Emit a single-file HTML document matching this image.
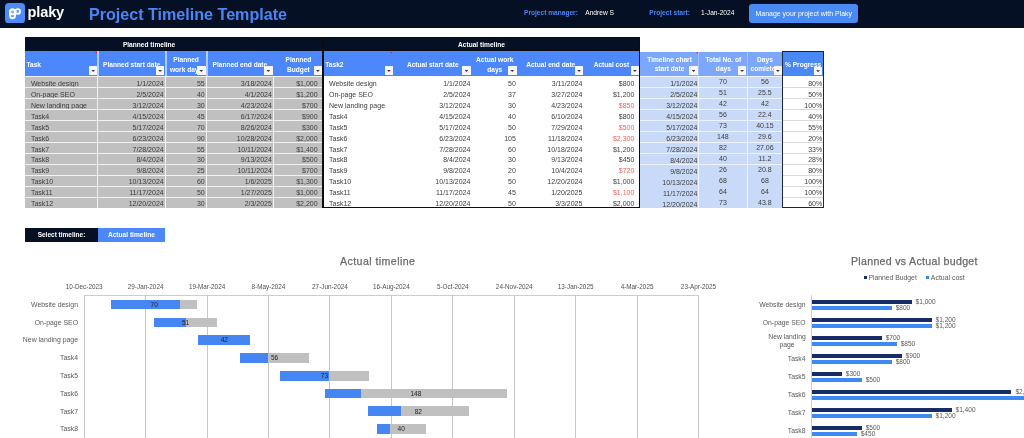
<!DOCTYPE html>
<html><head><meta charset="utf-8"><title>Project Timeline Template</title>
<style>
html,body{margin:0;padding:0;background:#fff;}
body{width:1024px;height:438px;overflow:hidden;position:relative;font-family:"Liberation Sans", sans-serif;}
#root{position:absolute;left:0;top:0;width:1024px;height:438px;overflow:hidden;will-change:transform;}
#root div{position:absolute;box-sizing:border-box;}
.t{white-space:nowrap;font-family:"Liberation Sans", sans-serif;}
.b{font-weight:bold;}
.c{text-align:center;}
.r{text-align:right;}
.d{font-size:7px;color:#3c3c3c;}
</style></head><body><div id="root">
<div style="left:0px;top:0px;width:1024px;height:27.8px;background:#051024;"></div>
<svg style="position:absolute;left:5px;top:2.85px" width="20" height="20.4" viewBox="0 0 20 20.4"><rect x="0" y="0" width="20" height="20.4" rx="3.8" fill="#4d8bfa"/>
<g fill="rgba(255,255,255,0.15)" stroke="#fff" stroke-width="1.8"><rect x="5.0" y="6.35" width="5.0" height="8.9" rx="2.5"/><circle cx="7.5" cy="8.85" r="2.5"/><circle cx="12.75" cy="8.55" r="2.35"/></g></svg>
<div class="t b" style="left:27.5px;top:3.3px;width:40px;height:18px;line-height:18px;font-size:14.6px;color:#fff;letter-spacing:-0.15px;">plaky</div>
<div class="t b" style="left:89px;top:2.6px;width:300px;height:22px;line-height:22px;font-size:16.1px;color:#4a86f7;">Project Timeline Template</div>
<div class="t b" style="left:524px;top:8.4px;width:60px;height:10px;line-height:10px;font-size:6.6px;color:#4a86f7;">Project manager:</div>
<div class="t " style="left:585.3px;top:8.4px;width:60px;height:10px;line-height:10px;font-size:6.6px;color:#fff;">Andrew S</div>
<div class="t b" style="left:649.3px;top:8.4px;width:60px;height:10px;line-height:10px;font-size:6.6px;color:#4a86f7;">Project start:</div>
<div class="t " style="left:701px;top:8.4px;width:60px;height:10px;line-height:10px;font-size:6.6px;color:#fff;">1-Jan-2024</div>
<div style="left:748.9px;top:3.6px;width:109.2px;height:19.5px;background:#4a8af3;border-radius:3.2px;"></div>
<div class="t c" style="left:748.9px;top:4.0px;width:109.8px;height:19.5px;line-height:19.5px;font-size:6.95px;color:#fff;">Manage your project with Plaky</div>
<div style="left:25px;top:37.3px;width:297.5px;height:14px;background:#051024;"></div>
<div class="t b c" style="left:25px;top:37.9px;width:248.2px;height:14.2px;line-height:14.2px;font-size:6.6px;color:#fff;">Planned timeline</div>
<div style="left:25px;top:51.3px;width:298px;height:24.3px;background:#4c88fb;"></div>
<div style="left:97.4px;top:51.3px;width:1.5px;height:24.3px;background:#b4ccfb;"></div>
<div style="left:165.2px;top:51.3px;width:1.5px;height:24.3px;background:#b4ccfb;"></div>
<div style="left:206px;top:51.3px;width:1.5px;height:24.3px;background:#b4ccfb;"></div>
<div style="left:25px;top:76.2px;width:297.5px;height:10.95px;background:#f2f2f2;"></div>
<div style="left:25px;top:77.10000000000001px;width:72.2px;height:10.049999999999999px;background:#c0c0c0;"></div>
<div class="t d" style="left:30.9px;top:78.8px;width:66.2px;height:10.049999999999999px;line-height:10.049999999999999px;">Website design</div>
<div style="left:98.4px;top:77.10000000000001px;width:66.6px;height:10.049999999999999px;background:#c0c0c0;"></div>
<div class="t d r" style="left:98.4px;top:78.8px;width:65.3px;height:10.049999999999999px;line-height:10.049999999999999px;">1/1/2024</div>
<div style="left:166.2px;top:77.10000000000001px;width:39.80000000000001px;height:10.049999999999999px;background:#c0c0c0;"></div>
<div class="t d r" style="left:166.2px;top:78.8px;width:38.500000000000014px;height:10.049999999999999px;line-height:10.049999999999999px;">55</div>
<div style="left:206.6px;top:77.10000000000001px;width:66.6px;height:10.049999999999999px;background:#c0c0c0;"></div>
<div class="t d r" style="left:206.6px;top:78.8px;width:65.3px;height:10.049999999999999px;line-height:10.049999999999999px;">3/18/2024</div>
<div style="left:274px;top:77.10000000000001px;width:48.80000000000001px;height:10.049999999999999px;background:#c0c0c0;"></div>
<div class="t d r" style="left:274px;top:78.8px;width:43.60000000000001px;height:10.049999999999999px;line-height:10.049999999999999px;">$1,000</div>
<div style="left:25px;top:87.15px;width:297.5px;height:10.95px;background:#f2f2f2;"></div>
<div style="left:25px;top:88.05000000000001px;width:72.2px;height:10.049999999999999px;background:#c0c0c0;"></div>
<div class="t d" style="left:30.9px;top:89.75px;width:66.2px;height:10.049999999999999px;line-height:10.049999999999999px;">On-page SEO</div>
<div style="left:98.4px;top:88.05000000000001px;width:66.6px;height:10.049999999999999px;background:#c0c0c0;"></div>
<div class="t d r" style="left:98.4px;top:89.75px;width:65.3px;height:10.049999999999999px;line-height:10.049999999999999px;">2/5/2024</div>
<div style="left:166.2px;top:88.05000000000001px;width:39.80000000000001px;height:10.049999999999999px;background:#c0c0c0;"></div>
<div class="t d r" style="left:166.2px;top:89.75px;width:38.500000000000014px;height:10.049999999999999px;line-height:10.049999999999999px;">40</div>
<div style="left:206.6px;top:88.05000000000001px;width:66.6px;height:10.049999999999999px;background:#c0c0c0;"></div>
<div class="t d r" style="left:206.6px;top:89.75px;width:65.3px;height:10.049999999999999px;line-height:10.049999999999999px;">4/1/2024</div>
<div style="left:274px;top:88.05000000000001px;width:48.80000000000001px;height:10.049999999999999px;background:#c0c0c0;"></div>
<div class="t d r" style="left:274px;top:89.75px;width:43.60000000000001px;height:10.049999999999999px;line-height:10.049999999999999px;">$1,200</div>
<div style="left:25px;top:98.1px;width:297.5px;height:10.95px;background:#f2f2f2;"></div>
<div style="left:25px;top:99.0px;width:72.2px;height:10.049999999999999px;background:#c0c0c0;"></div>
<div class="t d" style="left:30.9px;top:100.69999999999999px;width:66.2px;height:10.049999999999999px;line-height:10.049999999999999px;">New landing page</div>
<div style="left:98.4px;top:99.0px;width:66.6px;height:10.049999999999999px;background:#c0c0c0;"></div>
<div class="t d r" style="left:98.4px;top:100.69999999999999px;width:65.3px;height:10.049999999999999px;line-height:10.049999999999999px;">3/12/2024</div>
<div style="left:166.2px;top:99.0px;width:39.80000000000001px;height:10.049999999999999px;background:#c0c0c0;"></div>
<div class="t d r" style="left:166.2px;top:100.69999999999999px;width:38.500000000000014px;height:10.049999999999999px;line-height:10.049999999999999px;">30</div>
<div style="left:206.6px;top:99.0px;width:66.6px;height:10.049999999999999px;background:#c0c0c0;"></div>
<div class="t d r" style="left:206.6px;top:100.69999999999999px;width:65.3px;height:10.049999999999999px;line-height:10.049999999999999px;">4/23/2024</div>
<div style="left:274px;top:99.0px;width:48.80000000000001px;height:10.049999999999999px;background:#c0c0c0;"></div>
<div class="t d r" style="left:274px;top:100.69999999999999px;width:43.60000000000001px;height:10.049999999999999px;line-height:10.049999999999999px;">$700</div>
<div style="left:25px;top:109.05px;width:297.5px;height:10.95px;background:#f2f2f2;"></div>
<div style="left:25px;top:109.95px;width:72.2px;height:10.049999999999999px;background:#c0c0c0;"></div>
<div class="t d" style="left:30.9px;top:111.64999999999999px;width:66.2px;height:10.049999999999999px;line-height:10.049999999999999px;">Task4</div>
<div style="left:98.4px;top:109.95px;width:66.6px;height:10.049999999999999px;background:#c0c0c0;"></div>
<div class="t d r" style="left:98.4px;top:111.64999999999999px;width:65.3px;height:10.049999999999999px;line-height:10.049999999999999px;">4/15/2024</div>
<div style="left:166.2px;top:109.95px;width:39.80000000000001px;height:10.049999999999999px;background:#c0c0c0;"></div>
<div class="t d r" style="left:166.2px;top:111.64999999999999px;width:38.500000000000014px;height:10.049999999999999px;line-height:10.049999999999999px;">45</div>
<div style="left:206.6px;top:109.95px;width:66.6px;height:10.049999999999999px;background:#c0c0c0;"></div>
<div class="t d r" style="left:206.6px;top:111.64999999999999px;width:65.3px;height:10.049999999999999px;line-height:10.049999999999999px;">6/17/2024</div>
<div style="left:274px;top:109.95px;width:48.80000000000001px;height:10.049999999999999px;background:#c0c0c0;"></div>
<div class="t d r" style="left:274px;top:111.64999999999999px;width:43.60000000000001px;height:10.049999999999999px;line-height:10.049999999999999px;">$900</div>
<div style="left:25px;top:120.0px;width:297.5px;height:10.95px;background:#f2f2f2;"></div>
<div style="left:25px;top:120.9px;width:72.2px;height:10.049999999999999px;background:#c0c0c0;"></div>
<div class="t d" style="left:30.9px;top:122.6px;width:66.2px;height:10.049999999999999px;line-height:10.049999999999999px;">Task5</div>
<div style="left:98.4px;top:120.9px;width:66.6px;height:10.049999999999999px;background:#c0c0c0;"></div>
<div class="t d r" style="left:98.4px;top:122.6px;width:65.3px;height:10.049999999999999px;line-height:10.049999999999999px;">5/17/2024</div>
<div style="left:166.2px;top:120.9px;width:39.80000000000001px;height:10.049999999999999px;background:#c0c0c0;"></div>
<div class="t d r" style="left:166.2px;top:122.6px;width:38.500000000000014px;height:10.049999999999999px;line-height:10.049999999999999px;">70</div>
<div style="left:206.6px;top:120.9px;width:66.6px;height:10.049999999999999px;background:#c0c0c0;"></div>
<div class="t d r" style="left:206.6px;top:122.6px;width:65.3px;height:10.049999999999999px;line-height:10.049999999999999px;">8/26/2024</div>
<div style="left:274px;top:120.9px;width:48.80000000000001px;height:10.049999999999999px;background:#c0c0c0;"></div>
<div class="t d r" style="left:274px;top:122.6px;width:43.60000000000001px;height:10.049999999999999px;line-height:10.049999999999999px;">$300</div>
<div style="left:25px;top:130.95px;width:297.5px;height:10.95px;background:#f2f2f2;"></div>
<div style="left:25px;top:131.85px;width:72.2px;height:10.049999999999999px;background:#c0c0c0;"></div>
<div class="t d" style="left:30.9px;top:133.54999999999998px;width:66.2px;height:10.049999999999999px;line-height:10.049999999999999px;">Task6</div>
<div style="left:98.4px;top:131.85px;width:66.6px;height:10.049999999999999px;background:#c0c0c0;"></div>
<div class="t d r" style="left:98.4px;top:133.54999999999998px;width:65.3px;height:10.049999999999999px;line-height:10.049999999999999px;">6/23/2024</div>
<div style="left:166.2px;top:131.85px;width:39.80000000000001px;height:10.049999999999999px;background:#c0c0c0;"></div>
<div class="t d r" style="left:166.2px;top:133.54999999999998px;width:38.500000000000014px;height:10.049999999999999px;line-height:10.049999999999999px;">90</div>
<div style="left:206.6px;top:131.85px;width:66.6px;height:10.049999999999999px;background:#c0c0c0;"></div>
<div class="t d r" style="left:206.6px;top:133.54999999999998px;width:65.3px;height:10.049999999999999px;line-height:10.049999999999999px;">10/28/2024</div>
<div style="left:274px;top:131.85px;width:48.80000000000001px;height:10.049999999999999px;background:#c0c0c0;"></div>
<div class="t d r" style="left:274px;top:133.54999999999998px;width:43.60000000000001px;height:10.049999999999999px;line-height:10.049999999999999px;">$2,000</div>
<div style="left:25px;top:141.89999999999998px;width:297.5px;height:10.95px;background:#f2f2f2;"></div>
<div style="left:25px;top:142.79999999999998px;width:72.2px;height:10.049999999999999px;background:#c0c0c0;"></div>
<div class="t d" style="left:30.9px;top:144.49999999999997px;width:66.2px;height:10.049999999999999px;line-height:10.049999999999999px;">Task7</div>
<div style="left:98.4px;top:142.79999999999998px;width:66.6px;height:10.049999999999999px;background:#c0c0c0;"></div>
<div class="t d r" style="left:98.4px;top:144.49999999999997px;width:65.3px;height:10.049999999999999px;line-height:10.049999999999999px;">7/28/2024</div>
<div style="left:166.2px;top:142.79999999999998px;width:39.80000000000001px;height:10.049999999999999px;background:#c0c0c0;"></div>
<div class="t d r" style="left:166.2px;top:144.49999999999997px;width:38.500000000000014px;height:10.049999999999999px;line-height:10.049999999999999px;">55</div>
<div style="left:206.6px;top:142.79999999999998px;width:66.6px;height:10.049999999999999px;background:#c0c0c0;"></div>
<div class="t d r" style="left:206.6px;top:144.49999999999997px;width:65.3px;height:10.049999999999999px;line-height:10.049999999999999px;">10/11/2024</div>
<div style="left:274px;top:142.79999999999998px;width:48.80000000000001px;height:10.049999999999999px;background:#c0c0c0;"></div>
<div class="t d r" style="left:274px;top:144.49999999999997px;width:43.60000000000001px;height:10.049999999999999px;line-height:10.049999999999999px;">$1,400</div>
<div style="left:25px;top:152.85px;width:297.5px;height:10.95px;background:#f2f2f2;"></div>
<div style="left:25px;top:153.75px;width:72.2px;height:10.049999999999999px;background:#c0c0c0;"></div>
<div class="t d" style="left:30.9px;top:155.45px;width:66.2px;height:10.049999999999999px;line-height:10.049999999999999px;">Task8</div>
<div style="left:98.4px;top:153.75px;width:66.6px;height:10.049999999999999px;background:#c0c0c0;"></div>
<div class="t d r" style="left:98.4px;top:155.45px;width:65.3px;height:10.049999999999999px;line-height:10.049999999999999px;">8/4/2024</div>
<div style="left:166.2px;top:153.75px;width:39.80000000000001px;height:10.049999999999999px;background:#c0c0c0;"></div>
<div class="t d r" style="left:166.2px;top:155.45px;width:38.500000000000014px;height:10.049999999999999px;line-height:10.049999999999999px;">30</div>
<div style="left:206.6px;top:153.75px;width:66.6px;height:10.049999999999999px;background:#c0c0c0;"></div>
<div class="t d r" style="left:206.6px;top:155.45px;width:65.3px;height:10.049999999999999px;line-height:10.049999999999999px;">9/13/2024</div>
<div style="left:274px;top:153.75px;width:48.80000000000001px;height:10.049999999999999px;background:#c0c0c0;"></div>
<div class="t d r" style="left:274px;top:155.45px;width:43.60000000000001px;height:10.049999999999999px;line-height:10.049999999999999px;">$500</div>
<div style="left:25px;top:163.8px;width:297.5px;height:10.95px;background:#f2f2f2;"></div>
<div style="left:25px;top:164.70000000000002px;width:72.2px;height:10.049999999999999px;background:#c0c0c0;"></div>
<div class="t d" style="left:30.9px;top:166.4px;width:66.2px;height:10.049999999999999px;line-height:10.049999999999999px;">Task9</div>
<div style="left:98.4px;top:164.70000000000002px;width:66.6px;height:10.049999999999999px;background:#c0c0c0;"></div>
<div class="t d r" style="left:98.4px;top:166.4px;width:65.3px;height:10.049999999999999px;line-height:10.049999999999999px;">9/8/2024</div>
<div style="left:166.2px;top:164.70000000000002px;width:39.80000000000001px;height:10.049999999999999px;background:#c0c0c0;"></div>
<div class="t d r" style="left:166.2px;top:166.4px;width:38.500000000000014px;height:10.049999999999999px;line-height:10.049999999999999px;">25</div>
<div style="left:206.6px;top:164.70000000000002px;width:66.6px;height:10.049999999999999px;background:#c0c0c0;"></div>
<div class="t d r" style="left:206.6px;top:166.4px;width:65.3px;height:10.049999999999999px;line-height:10.049999999999999px;">10/11/2024</div>
<div style="left:274px;top:164.70000000000002px;width:48.80000000000001px;height:10.049999999999999px;background:#c0c0c0;"></div>
<div class="t d r" style="left:274px;top:166.4px;width:43.60000000000001px;height:10.049999999999999px;line-height:10.049999999999999px;">$700</div>
<div style="left:25px;top:174.75px;width:297.5px;height:10.95px;background:#f2f2f2;"></div>
<div style="left:25px;top:175.65px;width:72.2px;height:10.049999999999999px;background:#c0c0c0;"></div>
<div class="t d" style="left:30.9px;top:177.35px;width:66.2px;height:10.049999999999999px;line-height:10.049999999999999px;">Task10</div>
<div style="left:98.4px;top:175.65px;width:66.6px;height:10.049999999999999px;background:#c0c0c0;"></div>
<div class="t d r" style="left:98.4px;top:177.35px;width:65.3px;height:10.049999999999999px;line-height:10.049999999999999px;">10/13/2024</div>
<div style="left:166.2px;top:175.65px;width:39.80000000000001px;height:10.049999999999999px;background:#c0c0c0;"></div>
<div class="t d r" style="left:166.2px;top:177.35px;width:38.500000000000014px;height:10.049999999999999px;line-height:10.049999999999999px;">60</div>
<div style="left:206.6px;top:175.65px;width:66.6px;height:10.049999999999999px;background:#c0c0c0;"></div>
<div class="t d r" style="left:206.6px;top:177.35px;width:65.3px;height:10.049999999999999px;line-height:10.049999999999999px;">1/6/2025</div>
<div style="left:274px;top:175.65px;width:48.80000000000001px;height:10.049999999999999px;background:#c0c0c0;"></div>
<div class="t d r" style="left:274px;top:177.35px;width:43.60000000000001px;height:10.049999999999999px;line-height:10.049999999999999px;">$1,300</div>
<div style="left:25px;top:185.7px;width:297.5px;height:10.95px;background:#f2f2f2;"></div>
<div style="left:25px;top:186.6px;width:72.2px;height:10.049999999999999px;background:#c0c0c0;"></div>
<div class="t d" style="left:30.9px;top:188.29999999999998px;width:66.2px;height:10.049999999999999px;line-height:10.049999999999999px;">Task11</div>
<div style="left:98.4px;top:186.6px;width:66.6px;height:10.049999999999999px;background:#c0c0c0;"></div>
<div class="t d r" style="left:98.4px;top:188.29999999999998px;width:65.3px;height:10.049999999999999px;line-height:10.049999999999999px;">11/17/2024</div>
<div style="left:166.2px;top:186.6px;width:39.80000000000001px;height:10.049999999999999px;background:#c0c0c0;"></div>
<div class="t d r" style="left:166.2px;top:188.29999999999998px;width:38.500000000000014px;height:10.049999999999999px;line-height:10.049999999999999px;">50</div>
<div style="left:206.6px;top:186.6px;width:66.6px;height:10.049999999999999px;background:#c0c0c0;"></div>
<div class="t d r" style="left:206.6px;top:188.29999999999998px;width:65.3px;height:10.049999999999999px;line-height:10.049999999999999px;">1/27/2025</div>
<div style="left:274px;top:186.6px;width:48.80000000000001px;height:10.049999999999999px;background:#c0c0c0;"></div>
<div class="t d r" style="left:274px;top:188.29999999999998px;width:43.60000000000001px;height:10.049999999999999px;line-height:10.049999999999999px;">$1,000</div>
<div style="left:25px;top:196.64999999999998px;width:297.5px;height:10.95px;background:#f2f2f2;"></div>
<div style="left:25px;top:197.54999999999998px;width:72.2px;height:10.049999999999999px;background:#c0c0c0;"></div>
<div class="t d" style="left:30.9px;top:199.24999999999997px;width:66.2px;height:10.049999999999999px;line-height:10.049999999999999px;">Task12</div>
<div style="left:98.4px;top:197.54999999999998px;width:66.6px;height:10.049999999999999px;background:#c0c0c0;"></div>
<div class="t d r" style="left:98.4px;top:199.24999999999997px;width:65.3px;height:10.049999999999999px;line-height:10.049999999999999px;">12/20/2024</div>
<div style="left:166.2px;top:197.54999999999998px;width:39.80000000000001px;height:10.049999999999999px;background:#c0c0c0;"></div>
<div class="t d r" style="left:166.2px;top:199.24999999999997px;width:38.500000000000014px;height:10.049999999999999px;line-height:10.049999999999999px;">30</div>
<div style="left:206.6px;top:197.54999999999998px;width:66.6px;height:10.049999999999999px;background:#c0c0c0;"></div>
<div class="t d r" style="left:206.6px;top:199.24999999999997px;width:65.3px;height:10.049999999999999px;line-height:10.049999999999999px;">2/3/2025</div>
<div style="left:274px;top:197.54999999999998px;width:48.80000000000001px;height:10.049999999999999px;background:#c0c0c0;"></div>
<div class="t d r" style="left:274px;top:199.24999999999997px;width:43.60000000000001px;height:10.049999999999999px;line-height:10.049999999999999px;">$2,200</div>
<div class="t b" style="left:26.5px;top:57.3px;width:70.5px;height:16px;line-height:16px;font-size:6.6px;color:#fff;">Task</div>
<div class="t b c" style="left:98.4px;top:57.3px;width:66.6px;height:16px;line-height:16px;font-size:6.6px;color:#fff;">Planned start date</div>
<div class="t b c" style="left:166.2px;top:55.1px;width:39.8px;font-size:6.6px;color:#fff;line-height:9.4px;">Planned<br>work days</div>
<div class="t b c" style="left:206.6px;top:57.3px;width:66.6px;height:16px;line-height:16px;font-size:6.6px;color:#fff;">Planned end date</div>
<div class="t b c" style="left:274px;top:55.1px;width:48.8px;font-size:6.6px;color:#fff;line-height:9.4px;">Planned<br>Budget</div>
<div style="left:88.9px;top:66.4px;width:8.6px;height:8.3px;background:#f6f6f6;border-radius:0.6px;"><div style="left:2.4px;top:3.6px;width:3.8px;height:2px;background:#3a3a3a;clip-path:polygon(0 0,100% 0,50% 100%);"></div></div>
<div style="left:155.8px;top:66.4px;width:8.6px;height:8.3px;background:#f6f6f6;border-radius:0.6px;"><div style="left:2.4px;top:3.6px;width:3.8px;height:2px;background:#3a3a3a;clip-path:polygon(0 0,100% 0,50% 100%);"></div></div>
<div style="left:197px;top:66.4px;width:8.6px;height:8.3px;background:#f6f6f6;border-radius:0.6px;"><div style="left:2.4px;top:3.6px;width:3.8px;height:2px;background:#3a3a3a;clip-path:polygon(0 0,100% 0,50% 100%);"></div></div>
<div style="left:264px;top:66.4px;width:8.6px;height:8.3px;background:#f6f6f6;border-radius:0.6px;"><div style="left:2.4px;top:3.6px;width:3.8px;height:2px;background:#3a3a3a;clip-path:polygon(0 0,100% 0,50% 100%);"></div></div>
<div style="left:313.6px;top:66.4px;width:8.6px;height:8.3px;background:#f6f6f6;border-radius:0.6px;"><div style="left:2.4px;top:3.6px;width:3.8px;height:2px;background:#3a3a3a;clip-path:polygon(0 0,100% 0,50% 100%);"></div></div>
<div style="left:94.7px;top:51.6px;width:0;height:0;border-left:2.8px solid transparent;border-top:2.8px solid #e8234a;"></div>
<div style="left:322.4px;top:36.6px;width:317.6px;height:171.8px;background:#0b0d12;"></div>
<div style="left:323.9px;top:38px;width:314.90000000000003px;height:11.3px;background:#051024;"></div>
<div class="t b c" style="left:323px;top:37.9px;width:317px;height:14.2px;line-height:14.2px;font-size:6.6px;color:#fff;">Actual timeline</div>
<div style="left:323.9px;top:51px;width:314.90000000000003px;height:24.6px;background:#4c88fb;"></div>
<div style="left:323.9px;top:75.6px;width:314.90000000000003px;height:131.3px;background:#fff;"></div>
<div class="t d" style="left:329.0px;top:78.8px;width:64.30000000000001px;height:10.049999999999999px;line-height:10.049999999999999px;color:#3c3c3c;">Website design</div>
<div class="t d r" style="left:393.5px;top:78.8px;width:76.9px;height:10.049999999999999px;line-height:10.049999999999999px;color:#3c3c3c;">1/1/2024</div>
<div class="t d r" style="left:472px;top:78.8px;width:43.9px;height:10.049999999999999px;line-height:10.049999999999999px;color:#3c3c3c;">50</div>
<div class="t d r" style="left:517.5px;top:78.8px;width:64.9px;height:10.049999999999999px;line-height:10.049999999999999px;color:#3c3c3c;">3/11/2024</div>
<div class="t d r" style="left:584px;top:78.8px;width:50.399999999999956px;height:10.049999999999999px;line-height:10.049999999999999px;color:#3c3c3c;">$800</div>
<div class="t d" style="left:329.0px;top:89.75px;width:64.30000000000001px;height:10.049999999999999px;line-height:10.049999999999999px;color:#3c3c3c;">On-page SEO</div>
<div class="t d r" style="left:393.5px;top:89.75px;width:76.9px;height:10.049999999999999px;line-height:10.049999999999999px;color:#3c3c3c;">2/5/2024</div>
<div class="t d r" style="left:472px;top:89.75px;width:43.9px;height:10.049999999999999px;line-height:10.049999999999999px;color:#3c3c3c;">37</div>
<div class="t d r" style="left:517.5px;top:89.75px;width:64.9px;height:10.049999999999999px;line-height:10.049999999999999px;color:#3c3c3c;">3/27/2024</div>
<div class="t d r" style="left:584px;top:89.75px;width:50.399999999999956px;height:10.049999999999999px;line-height:10.049999999999999px;color:#3c3c3c;">$1,200</div>
<div class="t d" style="left:329.0px;top:100.69999999999999px;width:64.30000000000001px;height:10.049999999999999px;line-height:10.049999999999999px;color:#3c3c3c;">New landing page</div>
<div class="t d r" style="left:393.5px;top:100.69999999999999px;width:76.9px;height:10.049999999999999px;line-height:10.049999999999999px;color:#3c3c3c;">3/12/2024</div>
<div class="t d r" style="left:472px;top:100.69999999999999px;width:43.9px;height:10.049999999999999px;line-height:10.049999999999999px;color:#3c3c3c;">30</div>
<div class="t d r" style="left:517.5px;top:100.69999999999999px;width:64.9px;height:10.049999999999999px;line-height:10.049999999999999px;color:#3c3c3c;">4/23/2024</div>
<div class="t d r" style="left:584px;top:100.69999999999999px;width:50.399999999999956px;height:10.049999999999999px;line-height:10.049999999999999px;color:#f0635a;">$850</div>
<div class="t d" style="left:329.0px;top:111.64999999999999px;width:64.30000000000001px;height:10.049999999999999px;line-height:10.049999999999999px;color:#3c3c3c;">Task4</div>
<div class="t d r" style="left:393.5px;top:111.64999999999999px;width:76.9px;height:10.049999999999999px;line-height:10.049999999999999px;color:#3c3c3c;">4/15/2024</div>
<div class="t d r" style="left:472px;top:111.64999999999999px;width:43.9px;height:10.049999999999999px;line-height:10.049999999999999px;color:#3c3c3c;">40</div>
<div class="t d r" style="left:517.5px;top:111.64999999999999px;width:64.9px;height:10.049999999999999px;line-height:10.049999999999999px;color:#3c3c3c;">6/10/2024</div>
<div class="t d r" style="left:584px;top:111.64999999999999px;width:50.399999999999956px;height:10.049999999999999px;line-height:10.049999999999999px;color:#3c3c3c;">$800</div>
<div class="t d" style="left:329.0px;top:122.6px;width:64.30000000000001px;height:10.049999999999999px;line-height:10.049999999999999px;color:#3c3c3c;">Task5</div>
<div class="t d r" style="left:393.5px;top:122.6px;width:76.9px;height:10.049999999999999px;line-height:10.049999999999999px;color:#3c3c3c;">5/17/2024</div>
<div class="t d r" style="left:472px;top:122.6px;width:43.9px;height:10.049999999999999px;line-height:10.049999999999999px;color:#3c3c3c;">50</div>
<div class="t d r" style="left:517.5px;top:122.6px;width:64.9px;height:10.049999999999999px;line-height:10.049999999999999px;color:#3c3c3c;">7/29/2024</div>
<div class="t d r" style="left:584px;top:122.6px;width:50.399999999999956px;height:10.049999999999999px;line-height:10.049999999999999px;color:#f0635a;">$500</div>
<div class="t d" style="left:329.0px;top:133.54999999999998px;width:64.30000000000001px;height:10.049999999999999px;line-height:10.049999999999999px;color:#3c3c3c;">Task6</div>
<div class="t d r" style="left:393.5px;top:133.54999999999998px;width:76.9px;height:10.049999999999999px;line-height:10.049999999999999px;color:#3c3c3c;">6/23/2024</div>
<div class="t d r" style="left:472px;top:133.54999999999998px;width:43.9px;height:10.049999999999999px;line-height:10.049999999999999px;color:#3c3c3c;">105</div>
<div class="t d r" style="left:517.5px;top:133.54999999999998px;width:64.9px;height:10.049999999999999px;line-height:10.049999999999999px;color:#3c3c3c;">11/18/2024</div>
<div class="t d r" style="left:584px;top:133.54999999999998px;width:50.399999999999956px;height:10.049999999999999px;line-height:10.049999999999999px;color:#f0635a;">$2,300</div>
<div class="t d" style="left:329.0px;top:144.49999999999997px;width:64.30000000000001px;height:10.049999999999999px;line-height:10.049999999999999px;color:#3c3c3c;">Task7</div>
<div class="t d r" style="left:393.5px;top:144.49999999999997px;width:76.9px;height:10.049999999999999px;line-height:10.049999999999999px;color:#3c3c3c;">7/28/2024</div>
<div class="t d r" style="left:472px;top:144.49999999999997px;width:43.9px;height:10.049999999999999px;line-height:10.049999999999999px;color:#3c3c3c;">60</div>
<div class="t d r" style="left:517.5px;top:144.49999999999997px;width:64.9px;height:10.049999999999999px;line-height:10.049999999999999px;color:#3c3c3c;">10/18/2024</div>
<div class="t d r" style="left:584px;top:144.49999999999997px;width:50.399999999999956px;height:10.049999999999999px;line-height:10.049999999999999px;color:#3c3c3c;">$1,200</div>
<div class="t d" style="left:329.0px;top:155.45px;width:64.30000000000001px;height:10.049999999999999px;line-height:10.049999999999999px;color:#3c3c3c;">Task8</div>
<div class="t d r" style="left:393.5px;top:155.45px;width:76.9px;height:10.049999999999999px;line-height:10.049999999999999px;color:#3c3c3c;">8/4/2024</div>
<div class="t d r" style="left:472px;top:155.45px;width:43.9px;height:10.049999999999999px;line-height:10.049999999999999px;color:#3c3c3c;">30</div>
<div class="t d r" style="left:517.5px;top:155.45px;width:64.9px;height:10.049999999999999px;line-height:10.049999999999999px;color:#3c3c3c;">9/13/2024</div>
<div class="t d r" style="left:584px;top:155.45px;width:50.399999999999956px;height:10.049999999999999px;line-height:10.049999999999999px;color:#3c3c3c;">$450</div>
<div class="t d" style="left:329.0px;top:166.4px;width:64.30000000000001px;height:10.049999999999999px;line-height:10.049999999999999px;color:#3c3c3c;">Task9</div>
<div class="t d r" style="left:393.5px;top:166.4px;width:76.9px;height:10.049999999999999px;line-height:10.049999999999999px;color:#3c3c3c;">9/8/2024</div>
<div class="t d r" style="left:472px;top:166.4px;width:43.9px;height:10.049999999999999px;line-height:10.049999999999999px;color:#3c3c3c;">20</div>
<div class="t d r" style="left:517.5px;top:166.4px;width:64.9px;height:10.049999999999999px;line-height:10.049999999999999px;color:#3c3c3c;">10/4/2024</div>
<div class="t d r" style="left:584px;top:166.4px;width:50.399999999999956px;height:10.049999999999999px;line-height:10.049999999999999px;color:#f0635a;">$720</div>
<div class="t d" style="left:329.0px;top:177.35px;width:64.30000000000001px;height:10.049999999999999px;line-height:10.049999999999999px;color:#3c3c3c;">Task10</div>
<div class="t d r" style="left:393.5px;top:177.35px;width:76.9px;height:10.049999999999999px;line-height:10.049999999999999px;color:#3c3c3c;">10/13/2024</div>
<div class="t d r" style="left:472px;top:177.35px;width:43.9px;height:10.049999999999999px;line-height:10.049999999999999px;color:#3c3c3c;">50</div>
<div class="t d r" style="left:517.5px;top:177.35px;width:64.9px;height:10.049999999999999px;line-height:10.049999999999999px;color:#3c3c3c;">12/20/2024</div>
<div class="t d r" style="left:584px;top:177.35px;width:50.399999999999956px;height:10.049999999999999px;line-height:10.049999999999999px;color:#3c3c3c;">$1,000</div>
<div class="t d" style="left:329.0px;top:188.29999999999998px;width:64.30000000000001px;height:10.049999999999999px;line-height:10.049999999999999px;color:#3c3c3c;">Task11</div>
<div class="t d r" style="left:393.5px;top:188.29999999999998px;width:76.9px;height:10.049999999999999px;line-height:10.049999999999999px;color:#3c3c3c;">11/17/2024</div>
<div class="t d r" style="left:472px;top:188.29999999999998px;width:43.9px;height:10.049999999999999px;line-height:10.049999999999999px;color:#3c3c3c;">45</div>
<div class="t d r" style="left:517.5px;top:188.29999999999998px;width:64.9px;height:10.049999999999999px;line-height:10.049999999999999px;color:#3c3c3c;">1/20/2025</div>
<div class="t d r" style="left:584px;top:188.29999999999998px;width:50.399999999999956px;height:10.049999999999999px;line-height:10.049999999999999px;color:#f0635a;">$1,100</div>
<div class="t d" style="left:329.0px;top:199.24999999999997px;width:64.30000000000001px;height:10.049999999999999px;line-height:10.049999999999999px;color:#3c3c3c;">Task12</div>
<div class="t d r" style="left:393.5px;top:199.24999999999997px;width:76.9px;height:10.049999999999999px;line-height:10.049999999999999px;color:#3c3c3c;">12/20/2024</div>
<div class="t d r" style="left:472px;top:199.24999999999997px;width:43.9px;height:10.049999999999999px;line-height:10.049999999999999px;color:#3c3c3c;">50</div>
<div class="t d r" style="left:517.5px;top:199.24999999999997px;width:64.9px;height:10.049999999999999px;line-height:10.049999999999999px;color:#3c3c3c;">3/3/2025</div>
<div class="t d r" style="left:584px;top:199.24999999999997px;width:50.399999999999956px;height:10.049999999999999px;line-height:10.049999999999999px;color:#3c3c3c;">$2,000</div>
<div class="t b" style="left:325.3px;top:57.3px;width:64.69999999999999px;height:16px;line-height:16px;font-size:6.6px;color:#fff;">Task2</div>
<div class="t b c" style="left:393.5px;top:57.3px;width:78.5px;height:16px;line-height:16px;font-size:6.6px;color:#fff;">Actual start date</div>
<div class="t b c" style="left:472px;top:55.2px;width:45.5px;font-size:6.6px;color:#fff;line-height:9.5px;">Actual work<br>days</div>
<div class="t b c" style="left:517.5px;top:57.3px;width:66.5px;height:16px;line-height:16px;font-size:6.6px;color:#fff;">Actual end date</div>
<div class="t b c" style="left:584px;top:57.3px;width:54.799999999999955px;height:16px;line-height:16px;font-size:6.6px;color:#fff;">Actual cost</div>
<div style="left:384.6px;top:66.4px;width:8.6px;height:8.3px;background:#f6f6f6;border-radius:0.6px;"><div style="left:2.4px;top:3.6px;width:3.8px;height:2px;background:#3a3a3a;clip-path:polygon(0 0,100% 0,50% 100%);"></div></div>
<div style="left:462.2px;top:66.4px;width:8.6px;height:8.3px;background:#f6f6f6;border-radius:0.6px;"><div style="left:2.4px;top:3.6px;width:3.8px;height:2px;background:#3a3a3a;clip-path:polygon(0 0,100% 0,50% 100%);"></div></div>
<div style="left:508px;top:66.4px;width:8.6px;height:8.3px;background:#f6f6f6;border-radius:0.6px;"><div style="left:2.4px;top:3.6px;width:3.8px;height:2px;background:#3a3a3a;clip-path:polygon(0 0,100% 0,50% 100%);"></div></div>
<div style="left:574.8px;top:66.4px;width:8.6px;height:8.3px;background:#f6f6f6;border-radius:0.6px;"><div style="left:2.4px;top:3.6px;width:3.8px;height:2px;background:#3a3a3a;clip-path:polygon(0 0,100% 0,50% 100%);"></div></div>
<div style="left:630.6px;top:66.4px;width:8.6px;height:8.3px;background:#f6f6f6;border-radius:0.6px;"><div style="left:2.4px;top:3.6px;width:3.8px;height:2px;background:#3a3a3a;clip-path:polygon(0 0,100% 0,50% 100%);"></div></div>
<div style="left:390.2px;top:51.7px;width:0;height:0;border-left:2.8px solid transparent;border-top:2.8px solid #e8234a;"></div>
<div style="left:640.3px;top:52px;width:141.9px;height:23.6px;background:#a4c1fa;"></div>
<div style="left:640.3px;top:76.2px;width:141.9px;height:131.4px;background:#eef3fd;"></div>
<div style="left:640.3px;top:52px;width:57.90000000000009px;height:23.6px;background:#7ca7fb;"></div>
<div style="left:699.2px;top:52px;width:47.39999999999998px;height:23.6px;background:#7ca7fb;"></div>
<div style="left:747.6px;top:52px;width:34.60000000000002px;height:23.6px;background:#7ca7fb;"></div>
<div style="left:640.3px;top:76.9px;width:57.90000000000009px;height:10.25px;background:#c9daf8;"></div>
<div class="t d r" style="left:640.3px;top:79.10000000000001px;width:57.100000000000094px;height:10.049999999999999px;line-height:10.049999999999999px;">1/1/2024</div>
<div style="left:699.2px;top:76.9px;width:47.39999999999998px;height:10.25px;background:#c9daf8;"></div>
<div class="t d c" style="left:699.2px;top:77.10000000000001px;width:47.39999999999998px;height:10.049999999999999px;line-height:10.049999999999999px;">70</div>
<div style="left:747.6px;top:76.9px;width:34.60000000000002px;height:10.25px;background:#c9daf8;"></div>
<div class="t d c" style="left:747.6px;top:77.10000000000001px;width:34.60000000000002px;height:10.049999999999999px;line-height:10.049999999999999px;">56</div>
<div style="left:640.3px;top:87.85000000000001px;width:57.90000000000009px;height:10.25px;background:#c9daf8;"></div>
<div class="t d r" style="left:640.3px;top:90.05000000000001px;width:57.100000000000094px;height:10.049999999999999px;line-height:10.049999999999999px;">2/5/2024</div>
<div style="left:699.2px;top:87.85000000000001px;width:47.39999999999998px;height:10.25px;background:#c9daf8;"></div>
<div class="t d c" style="left:699.2px;top:88.05000000000001px;width:47.39999999999998px;height:10.049999999999999px;line-height:10.049999999999999px;">51</div>
<div style="left:747.6px;top:87.85000000000001px;width:34.60000000000002px;height:10.25px;background:#c9daf8;"></div>
<div class="t d c" style="left:747.6px;top:88.05000000000001px;width:34.60000000000002px;height:10.049999999999999px;line-height:10.049999999999999px;">25.5</div>
<div style="left:640.3px;top:98.8px;width:57.90000000000009px;height:10.25px;background:#c9daf8;"></div>
<div class="t d r" style="left:640.3px;top:101.0px;width:57.100000000000094px;height:10.049999999999999px;line-height:10.049999999999999px;">3/12/2024</div>
<div style="left:699.2px;top:98.8px;width:47.39999999999998px;height:10.25px;background:#c9daf8;"></div>
<div class="t d c" style="left:699.2px;top:99.0px;width:47.39999999999998px;height:10.049999999999999px;line-height:10.049999999999999px;">42</div>
<div style="left:747.6px;top:98.8px;width:34.60000000000002px;height:10.25px;background:#c9daf8;"></div>
<div class="t d c" style="left:747.6px;top:99.0px;width:34.60000000000002px;height:10.049999999999999px;line-height:10.049999999999999px;">42</div>
<div style="left:640.3px;top:109.75px;width:57.90000000000009px;height:10.25px;background:#c9daf8;"></div>
<div class="t d r" style="left:640.3px;top:111.95px;width:57.100000000000094px;height:10.049999999999999px;line-height:10.049999999999999px;">4/15/2024</div>
<div style="left:699.2px;top:109.75px;width:47.39999999999998px;height:10.25px;background:#c9daf8;"></div>
<div class="t d c" style="left:699.2px;top:109.95px;width:47.39999999999998px;height:10.049999999999999px;line-height:10.049999999999999px;">56</div>
<div style="left:747.6px;top:109.75px;width:34.60000000000002px;height:10.25px;background:#c9daf8;"></div>
<div class="t d c" style="left:747.6px;top:109.95px;width:34.60000000000002px;height:10.049999999999999px;line-height:10.049999999999999px;">22.4</div>
<div style="left:640.3px;top:120.7px;width:57.90000000000009px;height:10.25px;background:#c9daf8;"></div>
<div class="t d r" style="left:640.3px;top:122.9px;width:57.100000000000094px;height:10.049999999999999px;line-height:10.049999999999999px;">5/17/2024</div>
<div style="left:699.2px;top:120.7px;width:47.39999999999998px;height:10.25px;background:#c9daf8;"></div>
<div class="t d c" style="left:699.2px;top:120.9px;width:47.39999999999998px;height:10.049999999999999px;line-height:10.049999999999999px;">73</div>
<div style="left:747.6px;top:120.7px;width:34.60000000000002px;height:10.25px;background:#c9daf8;"></div>
<div class="t d c" style="left:747.6px;top:120.9px;width:34.60000000000002px;height:10.049999999999999px;line-height:10.049999999999999px;">40.15</div>
<div style="left:640.3px;top:131.64999999999998px;width:57.90000000000009px;height:10.25px;background:#c9daf8;"></div>
<div class="t d r" style="left:640.3px;top:133.85px;width:57.100000000000094px;height:10.049999999999999px;line-height:10.049999999999999px;">6/23/2024</div>
<div style="left:699.2px;top:131.64999999999998px;width:47.39999999999998px;height:10.25px;background:#c9daf8;"></div>
<div class="t d c" style="left:699.2px;top:131.85px;width:47.39999999999998px;height:10.049999999999999px;line-height:10.049999999999999px;">148</div>
<div style="left:747.6px;top:131.64999999999998px;width:34.60000000000002px;height:10.25px;background:#c9daf8;"></div>
<div class="t d c" style="left:747.6px;top:131.85px;width:34.60000000000002px;height:10.049999999999999px;line-height:10.049999999999999px;">29.6</div>
<div style="left:640.3px;top:142.59999999999997px;width:57.90000000000009px;height:10.25px;background:#c9daf8;"></div>
<div class="t d r" style="left:640.3px;top:144.79999999999998px;width:57.100000000000094px;height:10.049999999999999px;line-height:10.049999999999999px;">7/28/2024</div>
<div style="left:699.2px;top:142.59999999999997px;width:47.39999999999998px;height:10.25px;background:#c9daf8;"></div>
<div class="t d c" style="left:699.2px;top:142.79999999999998px;width:47.39999999999998px;height:10.049999999999999px;line-height:10.049999999999999px;">82</div>
<div style="left:747.6px;top:142.59999999999997px;width:34.60000000000002px;height:10.25px;background:#c9daf8;"></div>
<div class="t d c" style="left:747.6px;top:142.79999999999998px;width:34.60000000000002px;height:10.049999999999999px;line-height:10.049999999999999px;">27.06</div>
<div style="left:640.3px;top:153.54999999999998px;width:57.90000000000009px;height:10.25px;background:#c9daf8;"></div>
<div class="t d r" style="left:640.3px;top:155.75px;width:57.100000000000094px;height:10.049999999999999px;line-height:10.049999999999999px;">8/4/2024</div>
<div style="left:699.2px;top:153.54999999999998px;width:47.39999999999998px;height:10.25px;background:#c9daf8;"></div>
<div class="t d c" style="left:699.2px;top:153.75px;width:47.39999999999998px;height:10.049999999999999px;line-height:10.049999999999999px;">40</div>
<div style="left:747.6px;top:153.54999999999998px;width:34.60000000000002px;height:10.25px;background:#c9daf8;"></div>
<div class="t d c" style="left:747.6px;top:153.75px;width:34.60000000000002px;height:10.049999999999999px;line-height:10.049999999999999px;">11.2</div>
<div style="left:640.3px;top:164.5px;width:57.90000000000009px;height:10.25px;background:#c9daf8;"></div>
<div class="t d r" style="left:640.3px;top:166.70000000000002px;width:57.100000000000094px;height:10.049999999999999px;line-height:10.049999999999999px;">9/8/2024</div>
<div style="left:699.2px;top:164.5px;width:47.39999999999998px;height:10.25px;background:#c9daf8;"></div>
<div class="t d c" style="left:699.2px;top:164.70000000000002px;width:47.39999999999998px;height:10.049999999999999px;line-height:10.049999999999999px;">26</div>
<div style="left:747.6px;top:164.5px;width:34.60000000000002px;height:10.25px;background:#c9daf8;"></div>
<div class="t d c" style="left:747.6px;top:164.70000000000002px;width:34.60000000000002px;height:10.049999999999999px;line-height:10.049999999999999px;">20.8</div>
<div style="left:640.3px;top:175.45px;width:57.90000000000009px;height:10.25px;background:#c9daf8;"></div>
<div class="t d r" style="left:640.3px;top:177.65px;width:57.100000000000094px;height:10.049999999999999px;line-height:10.049999999999999px;">10/13/2024</div>
<div style="left:699.2px;top:175.45px;width:47.39999999999998px;height:10.25px;background:#c9daf8;"></div>
<div class="t d c" style="left:699.2px;top:175.65px;width:47.39999999999998px;height:10.049999999999999px;line-height:10.049999999999999px;">68</div>
<div style="left:747.6px;top:175.45px;width:34.60000000000002px;height:10.25px;background:#c9daf8;"></div>
<div class="t d c" style="left:747.6px;top:175.65px;width:34.60000000000002px;height:10.049999999999999px;line-height:10.049999999999999px;">68</div>
<div style="left:640.3px;top:186.39999999999998px;width:57.90000000000009px;height:10.25px;background:#c9daf8;"></div>
<div class="t d r" style="left:640.3px;top:188.6px;width:57.100000000000094px;height:10.049999999999999px;line-height:10.049999999999999px;">11/17/2024</div>
<div style="left:699.2px;top:186.39999999999998px;width:47.39999999999998px;height:10.25px;background:#c9daf8;"></div>
<div class="t d c" style="left:699.2px;top:186.6px;width:47.39999999999998px;height:10.049999999999999px;line-height:10.049999999999999px;">64</div>
<div style="left:747.6px;top:186.39999999999998px;width:34.60000000000002px;height:10.25px;background:#c9daf8;"></div>
<div class="t d c" style="left:747.6px;top:186.6px;width:34.60000000000002px;height:10.049999999999999px;line-height:10.049999999999999px;">64</div>
<div style="left:640.3px;top:197.34999999999997px;width:57.90000000000009px;height:10.25px;background:#c9daf8;"></div>
<div class="t d r" style="left:640.3px;top:199.54999999999998px;width:57.100000000000094px;height:10.049999999999999px;line-height:10.049999999999999px;">12/20/2024</div>
<div style="left:699.2px;top:197.34999999999997px;width:47.39999999999998px;height:10.25px;background:#c9daf8;"></div>
<div class="t d c" style="left:699.2px;top:197.54999999999998px;width:47.39999999999998px;height:10.049999999999999px;line-height:10.049999999999999px;">73</div>
<div style="left:747.6px;top:197.34999999999997px;width:34.60000000000002px;height:10.25px;background:#c9daf8;"></div>
<div class="t d c" style="left:747.6px;top:197.54999999999998px;width:34.60000000000002px;height:10.049999999999999px;line-height:10.049999999999999px;">43.8</div>
<div class="t b c" style="left:640.3px;top:54.8px;width:58.5px;font-size:6.6px;color:#fff;line-height:9.6px;">Timeline chart<br>start date</div>
<div class="t b c" style="left:699.2px;top:54.8px;width:48.4px;font-size:6.6px;color:#fff;line-height:9.6px;">Total No. of<br>days</div>
<div class="t b c" style="left:747.6px;top:54.8px;width:34.8px;font-size:6.6px;color:#fff;line-height:9.6px;">Days<br>comleted</div>
<div style="left:689.3px;top:66.4px;width:8.6px;height:8.3px;background:#f6f6f6;border-radius:0.6px;"><div style="left:2.4px;top:3.6px;width:3.8px;height:2px;background:#3a3a3a;clip-path:polygon(0 0,100% 0,50% 100%);"></div></div>
<div style="left:737.8px;top:66.4px;width:8.6px;height:8.3px;background:#f6f6f6;border-radius:0.6px;"><div style="left:2.4px;top:3.6px;width:3.8px;height:2px;background:#3a3a3a;clip-path:polygon(0 0,100% 0,50% 100%);"></div></div>
<div style="left:773.6px;top:66.4px;width:8.6px;height:8.3px;background:#f6f6f6;border-radius:0.6px;"><div style="left:2.4px;top:3.6px;width:3.8px;height:2px;background:#3a3a3a;clip-path:polygon(0 0,100% 0,50% 100%);"></div></div>
<div style="left:695.5px;top:52.1px;width:0;height:0;border-left:2.8px solid transparent;border-top:2.8px solid #e8234a;"></div>
<div style="left:782.1px;top:51.1px;width:41.9px;height:157.2px;background:#1a2540;"></div>
<div style="left:783.4px;top:52.4px;width:39.4px;height:23.2px;background:#4a89f5;"></div>
<div style="left:783.4px;top:75.9px;width:39.4px;height:131.2px;background:#fff;"></div>
<div class="t d r" style="left:783.9px;top:78.8px;width:38.3px;height:10.049999999999999px;line-height:10.049999999999999px;">80%</div>
<div style="left:783.4px;top:87.15px;width:39.4px;height:0.8px;background:#d9d9d9;"></div>
<div class="t d r" style="left:783.9px;top:89.75px;width:38.3px;height:10.049999999999999px;line-height:10.049999999999999px;">50%</div>
<div style="left:783.4px;top:98.1px;width:39.4px;height:0.8px;background:#d9d9d9;"></div>
<div class="t d r" style="left:783.9px;top:100.69999999999999px;width:38.3px;height:10.049999999999999px;line-height:10.049999999999999px;">100%</div>
<div style="left:783.4px;top:109.05px;width:39.4px;height:0.8px;background:#d9d9d9;"></div>
<div class="t d r" style="left:783.9px;top:111.64999999999999px;width:38.3px;height:10.049999999999999px;line-height:10.049999999999999px;">40%</div>
<div style="left:783.4px;top:120.0px;width:39.4px;height:0.8px;background:#d9d9d9;"></div>
<div class="t d r" style="left:783.9px;top:122.6px;width:38.3px;height:10.049999999999999px;line-height:10.049999999999999px;">55%</div>
<div style="left:783.4px;top:130.95px;width:39.4px;height:0.8px;background:#d9d9d9;"></div>
<div class="t d r" style="left:783.9px;top:133.54999999999998px;width:38.3px;height:10.049999999999999px;line-height:10.049999999999999px;">20%</div>
<div style="left:783.4px;top:141.89999999999998px;width:39.4px;height:0.8px;background:#d9d9d9;"></div>
<div class="t d r" style="left:783.9px;top:144.49999999999997px;width:38.3px;height:10.049999999999999px;line-height:10.049999999999999px;">33%</div>
<div style="left:783.4px;top:152.85px;width:39.4px;height:0.8px;background:#d9d9d9;"></div>
<div class="t d r" style="left:783.9px;top:155.45px;width:38.3px;height:10.049999999999999px;line-height:10.049999999999999px;">28%</div>
<div style="left:783.4px;top:163.8px;width:39.4px;height:0.8px;background:#d9d9d9;"></div>
<div class="t d r" style="left:783.9px;top:166.4px;width:38.3px;height:10.049999999999999px;line-height:10.049999999999999px;">80%</div>
<div style="left:783.4px;top:174.75px;width:39.4px;height:0.8px;background:#d9d9d9;"></div>
<div class="t d r" style="left:783.9px;top:177.35px;width:38.3px;height:10.049999999999999px;line-height:10.049999999999999px;">100%</div>
<div style="left:783.4px;top:185.7px;width:39.4px;height:0.8px;background:#d9d9d9;"></div>
<div class="t d r" style="left:783.9px;top:188.29999999999998px;width:38.3px;height:10.049999999999999px;line-height:10.049999999999999px;">100%</div>
<div style="left:783.4px;top:196.64999999999998px;width:39.4px;height:0.8px;background:#d9d9d9;"></div>
<div class="t d r" style="left:783.9px;top:199.24999999999997px;width:38.3px;height:10.049999999999999px;line-height:10.049999999999999px;">60%</div>
<div class="t b" style="left:785px;top:56.5px;width:38px;height:16px;line-height:16px;font-size:6.6px;color:#fff;">% Progress</div>
<div style="left:813.8px;top:66.6px;width:8.6px;height:8.3px;background:#f6f6f6;border-radius:0.6px;"><div style="left:2.4px;top:3.6px;width:3.8px;height:2px;background:#3a3a3a;clip-path:polygon(0 0,100% 0,50% 100%);"></div></div>
<div style="left:24.6px;top:228px;width:73px;height:14px;background:#051024;"></div>
<div class="t b c" style="left:25px;top:228px;width:73px;height:14px;line-height:14px;font-size:6.5px;color:#fff;">Select timeline:</div>
<div style="left:97.5px;top:228px;width:67.8px;height:14px;background:#4c88fb;"></div>
<div class="t b c" style="left:97.5px;top:228px;width:67.8px;height:14px;line-height:14px;font-size:6.6px;color:#fff;">Actual timeline</div>
<div class="t c" style="left:277.7px;top:252.7px;width:200px;height:16px;line-height:16px;font-size:10.6px;letter-spacing:0.43px;color:#6a6a6a;-webkit-text-stroke:0.25px #6a6a6a;">Actual timeline</div>
<div style="left:84.2px;top:295.09999999999997px;width:614.3px;height:0.9px;background:#cdcdcd;"></div>
<div style="left:83.7px;top:295.4px;width:1px;height:150px;background:#c8c8c8;"></div>
<div class="t c" style="left:54.2px;top:281.5px;width:60px;height:10px;line-height:10px;font-size:6.35px;color:#505050;">10-Dec-2023</div>
<div style="left:145.13px;top:295.4px;width:1px;height:150px;background:#c8c8c8;"></div>
<div class="t c" style="left:115.63px;top:281.5px;width:60px;height:10px;line-height:10px;font-size:6.35px;color:#505050;">29-Jan-2024</div>
<div style="left:206.56px;top:295.4px;width:1px;height:150px;background:#c8c8c8;"></div>
<div class="t c" style="left:177.06px;top:281.5px;width:60px;height:10px;line-height:10px;font-size:6.35px;color:#505050;">19-Mar-2024</div>
<div style="left:267.99px;top:295.4px;width:1px;height:150px;background:#c8c8c8;"></div>
<div class="t c" style="left:238.49px;top:281.5px;width:60px;height:10px;line-height:10px;font-size:6.35px;color:#505050;">8-May-2024</div>
<div style="left:329.42px;top:295.4px;width:1px;height:150px;background:#c8c8c8;"></div>
<div class="t c" style="left:299.92px;top:281.5px;width:60px;height:10px;line-height:10px;font-size:6.35px;color:#505050;">27-Jun-2024</div>
<div style="left:390.84999999999997px;top:295.4px;width:1px;height:150px;background:#c8c8c8;"></div>
<div class="t c" style="left:361.34999999999997px;top:281.5px;width:60px;height:10px;line-height:10px;font-size:6.35px;color:#505050;">16-Aug-2024</div>
<div style="left:452.28px;top:295.4px;width:1px;height:150px;background:#c8c8c8;"></div>
<div class="t c" style="left:422.78px;top:281.5px;width:60px;height:10px;line-height:10px;font-size:6.35px;color:#505050;">5-Oct-2024</div>
<div style="left:513.71px;top:295.4px;width:1px;height:150px;background:#c8c8c8;"></div>
<div class="t c" style="left:484.21000000000004px;top:281.5px;width:60px;height:10px;line-height:10px;font-size:6.35px;color:#505050;">24-Nov-2024</div>
<div style="left:575.14px;top:295.4px;width:1px;height:150px;background:#c8c8c8;"></div>
<div class="t c" style="left:545.64px;top:281.5px;width:60px;height:10px;line-height:10px;font-size:6.35px;color:#505050;">13-Jan-2025</div>
<div style="left:636.57px;top:295.4px;width:1px;height:150px;background:#c8c8c8;"></div>
<div class="t c" style="left:607.07px;top:281.5px;width:60px;height:10px;line-height:10px;font-size:6.35px;color:#505050;">4-Mar-2025</div>
<div style="left:698.0px;top:295.4px;width:1px;height:150px;background:#c8c8c8;"></div>
<div class="t c" style="left:668.5px;top:281.5px;width:60px;height:10px;line-height:10px;font-size:6.35px;color:#505050;">23-Apr-2025</div>
<div style="left:111.23px;top:299.75px;width:86.0px;height:9.7px;background:#c0c0c0;"></div>
<div style="left:111.23px;top:299.75px;width:68.8px;height:9.7px;background:#4586f3;"></div>
<div class="t c" style="left:111.23px;top:299.8px;width:86.0px;height:10px;line-height:10px;font-size:6.5px;color:#222;">70</div>
<div class="t r" style="left:0px;top:299.9px;width:78px;height:10px;line-height:10px;font-size:6.9px;color:#595959;">Website design</div>
<div style="left:154.23px;top:317.54px;width:62.66px;height:9.7px;background:#c0c0c0;"></div>
<div style="left:154.23px;top:317.54px;width:31.33px;height:9.7px;background:#4586f3;"></div>
<div class="t c" style="left:154.23px;top:317.59px;width:62.66px;height:10px;line-height:10px;font-size:6.5px;color:#222;">51</div>
<div class="t r" style="left:0px;top:317.69px;width:78px;height:10px;line-height:10px;font-size:6.9px;color:#595959;">On-page SEO</div>
<div style="left:198.46px;top:335.33px;width:51.6px;height:9.7px;background:#c0c0c0;"></div>
<div style="left:198.46px;top:335.33px;width:51.6px;height:9.7px;background:#4586f3;"></div>
<div class="t c" style="left:198.46px;top:335.38px;width:51.6px;height:10px;line-height:10px;font-size:6.5px;color:#222;">42</div>
<div class="t r" style="left:0px;top:335.48px;width:78px;height:10px;line-height:10px;font-size:6.9px;color:#595959;">New landing page</div>
<div style="left:240.23px;top:353.12px;width:68.8px;height:9.7px;background:#c0c0c0;"></div>
<div style="left:240.23px;top:353.12px;width:27.52px;height:9.7px;background:#4586f3;"></div>
<div class="t c" style="left:240.23px;top:353.17px;width:68.8px;height:10px;line-height:10px;font-size:6.5px;color:#222;">56</div>
<div class="t r" style="left:0px;top:353.27px;width:78px;height:10px;line-height:10px;font-size:6.9px;color:#595959;">Task4</div>
<div style="left:279.55px;top:370.91px;width:89.69px;height:9.7px;background:#c0c0c0;"></div>
<div style="left:279.55px;top:370.91px;width:49.33px;height:9.7px;background:#4586f3;"></div>
<div class="t c" style="left:279.55px;top:370.96px;width:89.69px;height:10px;line-height:10px;font-size:6.5px;color:#222;">73</div>
<div class="t r" style="left:0px;top:371.06px;width:78px;height:10px;line-height:10px;font-size:6.9px;color:#595959;">Task5</div>
<div style="left:325.01px;top:388.7px;width:181.83px;height:9.7px;background:#c0c0c0;"></div>
<div style="left:325.01px;top:388.7px;width:36.37px;height:9.7px;background:#4586f3;"></div>
<div class="t c" style="left:325.01px;top:388.75px;width:181.83px;height:10px;line-height:10px;font-size:6.5px;color:#222;">148</div>
<div class="t r" style="left:0px;top:388.85px;width:78px;height:10px;line-height:10px;font-size:6.9px;color:#595959;">Task6</div>
<div style="left:368.01px;top:406.49px;width:100.75px;height:9.7px;background:#c0c0c0;"></div>
<div style="left:368.01px;top:406.49px;width:33.25px;height:9.7px;background:#4586f3;"></div>
<div class="t c" style="left:368.01px;top:406.54px;width:100.75px;height:10px;line-height:10px;font-size:6.5px;color:#222;">82</div>
<div class="t r" style="left:0px;top:406.64px;width:78px;height:10px;line-height:10px;font-size:6.9px;color:#595959;">Task7</div>
<div style="left:376.61px;top:424.28px;width:49.14px;height:9.7px;background:#c0c0c0;"></div>
<div style="left:376.61px;top:424.28px;width:13.76px;height:9.7px;background:#4586f3;"></div>
<div class="t c" style="left:376.61px;top:424.33px;width:49.14px;height:10px;line-height:10px;font-size:6.5px;color:#222;">40</div>
<div class="t r" style="left:0px;top:424.43px;width:78px;height:10px;line-height:10px;font-size:6.9px;color:#595959;">Task8</div>
<div class="t c" style="left:814.4px;top:252.9px;width:200px;height:16px;line-height:16px;font-size:10.6px;letter-spacing:0.3px;color:#6a6a6a;-webkit-text-stroke:0.25px #6a6a6a;">Planned vs Actual budget</div>
<div style="left:863.6px;top:276.2px;width:3px;height:3px;background:#172b66;"></div>
<div class="t " style="left:868.4px;top:272.7px;width:60px;height:10px;line-height:10px;font-size:6.8px;color:#595959;">Planned Budget</div>
<div style="left:925.8px;top:276.2px;width:3px;height:3px;background:#3d8af7;"></div>
<div class="t " style="left:930.8px;top:272.7px;width:60px;height:10px;line-height:10px;font-size:6.95px;color:#595959;">Actual cost</div>
<div style="left:811.4px;top:295px;width:0.9px;height:150px;background:#cfcfcf;"></div>
<div style="left:811.8px;top:299.6px;width:99.8px;height:4.1px;background:#172b66;"></div>
<div style="left:811.8px;top:305.6px;width:79.84px;height:4.1px;background:#3d8af7;"></div>
<div class="t " style="left:915.6px;top:297.05px;width:40px;height:10px;line-height:10px;font-size:6.55px;color:#595959;">$1,000</div>
<div class="t " style="left:895.64px;top:302.55px;width:40px;height:10px;line-height:10px;font-size:6.55px;color:#595959;">$800</div>
<div class="t r" style="left:705px;top:299.95px;width:100.5px;height:10px;line-height:10px;font-size:6.8px;color:#595959;">Website design</div>
<div style="left:811.8px;top:317.6px;width:119.76px;height:4.1px;background:#172b66;"></div>
<div style="left:811.8px;top:323.6px;width:119.76px;height:4.1px;background:#3d8af7;"></div>
<div class="t " style="left:935.56px;top:315.05px;width:40px;height:10px;line-height:10px;font-size:6.55px;color:#595959;">$1,200</div>
<div class="t " style="left:935.56px;top:320.55px;width:40px;height:10px;line-height:10px;font-size:6.55px;color:#595959;">$1,200</div>
<div class="t r" style="left:705px;top:317.95px;width:100.5px;height:10px;line-height:10px;font-size:6.8px;color:#595959;">On-page SEO</div>
<div style="left:811.8px;top:335.6px;width:69.86px;height:4.1px;background:#172b66;"></div>
<div style="left:811.8px;top:341.6px;width:84.83px;height:4.1px;background:#3d8af7;"></div>
<div class="t " style="left:885.66px;top:333.05px;width:40px;height:10px;line-height:10px;font-size:6.55px;color:#595959;">$700</div>
<div class="t " style="left:900.63px;top:338.55px;width:40px;height:10px;line-height:10px;font-size:6.55px;color:#595959;">$850</div>
<div class="t c" style="left:757px;top:332.65px;width:60px;font-size:6.8px;color:#595959;line-height:8.3px;">New landing<br>page</div>
<div style="left:811.8px;top:353.6px;width:89.82px;height:4.1px;background:#172b66;"></div>
<div style="left:811.8px;top:359.6px;width:79.84px;height:4.1px;background:#3d8af7;"></div>
<div class="t " style="left:905.62px;top:351.05px;width:40px;height:10px;line-height:10px;font-size:6.55px;color:#595959;">$900</div>
<div class="t " style="left:895.64px;top:356.55px;width:40px;height:10px;line-height:10px;font-size:6.55px;color:#595959;">$800</div>
<div class="t r" style="left:705px;top:353.95px;width:100.5px;height:10px;line-height:10px;font-size:6.8px;color:#595959;">Task4</div>
<div style="left:811.8px;top:371.6px;width:29.94px;height:4.1px;background:#172b66;"></div>
<div style="left:811.8px;top:377.6px;width:49.9px;height:4.1px;background:#3d8af7;"></div>
<div class="t " style="left:845.74px;top:369.05px;width:40px;height:10px;line-height:10px;font-size:6.55px;color:#595959;">$300</div>
<div class="t " style="left:865.7px;top:374.55px;width:40px;height:10px;line-height:10px;font-size:6.55px;color:#595959;">$500</div>
<div class="t r" style="left:705px;top:371.95px;width:100.5px;height:10px;line-height:10px;font-size:6.8px;color:#595959;">Task5</div>
<div style="left:811.8px;top:389.6px;width:199.6px;height:4.1px;background:#172b66;"></div>
<div style="left:811.8px;top:395.6px;width:229.54px;height:4.1px;background:#3d8af7;"></div>
<div class="t " style="left:1015.4px;top:387.05px;width:40px;height:10px;line-height:10px;font-size:6.55px;color:#595959;">$2,000</div>
<div class="t " style="left:1045.34px;top:392.55px;width:40px;height:10px;line-height:10px;font-size:6.55px;color:#595959;">$2,300</div>
<div class="t r" style="left:705px;top:389.95px;width:100.5px;height:10px;line-height:10px;font-size:6.8px;color:#595959;">Task6</div>
<div style="left:811.8px;top:407.6px;width:139.72px;height:4.1px;background:#172b66;"></div>
<div style="left:811.8px;top:413.6px;width:119.76px;height:4.1px;background:#3d8af7;"></div>
<div class="t " style="left:955.52px;top:405.05px;width:40px;height:10px;line-height:10px;font-size:6.55px;color:#595959;">$1,400</div>
<div class="t " style="left:935.56px;top:410.55px;width:40px;height:10px;line-height:10px;font-size:6.55px;color:#595959;">$1,200</div>
<div class="t r" style="left:705px;top:407.95px;width:100.5px;height:10px;line-height:10px;font-size:6.8px;color:#595959;">Task7</div>
<div style="left:811.8px;top:425.6px;width:49.9px;height:4.1px;background:#172b66;"></div>
<div style="left:811.8px;top:431.6px;width:44.91px;height:4.1px;background:#3d8af7;"></div>
<div class="t " style="left:865.7px;top:423.05px;width:40px;height:10px;line-height:10px;font-size:6.55px;color:#595959;">$500</div>
<div class="t " style="left:860.71px;top:428.55px;width:40px;height:10px;line-height:10px;font-size:6.55px;color:#595959;">$450</div>
<div class="t r" style="left:705px;top:425.95px;width:100.5px;height:10px;line-height:10px;font-size:6.8px;color:#595959;">Task8</div>
</div></body></html>
